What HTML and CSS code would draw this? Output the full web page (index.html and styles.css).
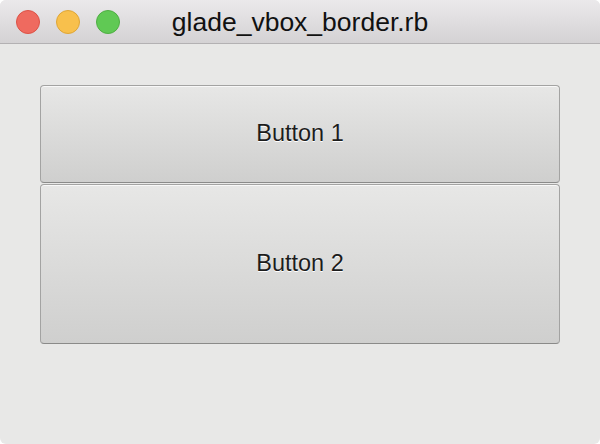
FILE: index.html
```html
<!DOCTYPE html>
<html lang="en">
<head>
    <meta charset="UTF-8">
    <title>glade_vbox_border.rb</title>
    <link rel="stylesheet" href="styles.css">
</head>
<body>
<div class="window">
    <div class="titlebar">
        <div class="lights">
            <span class="light close"></span>
            <span class="light minimize"></span>
            <span class="light zoom"></span>
        </div>
        <div class="title">glade_vbox_border.rb</div>
    </div>
    <div class="content">
        <div class="vbox">
            <button class="btn btn-one">Button 1</button>
            <button class="btn btn-two">Button 2</button>
        </div>
    </div>
</div>
</body>
</html>
```

FILE: styles.css
```css
* {
    margin: 0;
    padding: 0;
    box-sizing: border-box;
}
html, body {
    width: 600px;
    height: 444px;
    background: #ffffff;
    overflow: hidden;
}
body {
    font-family: 'Liberation Sans', Arial, sans-serif;
}
.window {
    width: 600px;
    height: 444px;
    border-radius: 6px;
    overflow: hidden;
    background: #e8e8e7;
    display: flex;
    flex-direction: column;
}
.titlebar {
    position: relative;
    height: 44px;
    background: linear-gradient(#ebe9eb, #d4d2d4);
    border-bottom: 1px solid #b3b1b3;
    display: flex;
    align-items: center;
    justify-content: center;
}
.lights {
    position: absolute;
    left: 16px;
    top: 10px;
    display: flex;
    gap: 16px;
}
.light {
    width: 24px;
    height: 24px;
    border-radius: 50%;
    display: block;
}
.close {
    background: #ef6a5f;
    border: 1px solid #dd5246;
}
.minimize {
    background: #f8c04c;
    border: 1px solid #dfa636;
}
.zoom {
    background: #60c954;
    border: 1px solid #4fae43;
}
.title {
    font-size: 26.5px;
    color: #111;
    margin-top: 1px;
}
.content {
    flex: 1;
    padding: 41px 40px 0 40px;
}
.vbox {
    display: flex;
    flex-direction: column;
    gap: 1px;
}
.btn {
    font-family: 'Liberation Sans', Arial, sans-serif;
    font-size: 23.5px;
    color: #1c1c1c;
    text-shadow: 0 1px 0 #ffffff;
    background: linear-gradient(#e7e7e6, #cfcfce);
    border: 1px solid #a3a3a2;
    border-bottom-color: #8a8a89;
    border-radius: 4px;
    box-shadow: inset 0 1px 0 #f8f8f8;
    width: 100%;
    padding-bottom: 2px;
}
.btn-one {
    height: 98px;
}
.btn-two {
    height: 160px;
}
```
